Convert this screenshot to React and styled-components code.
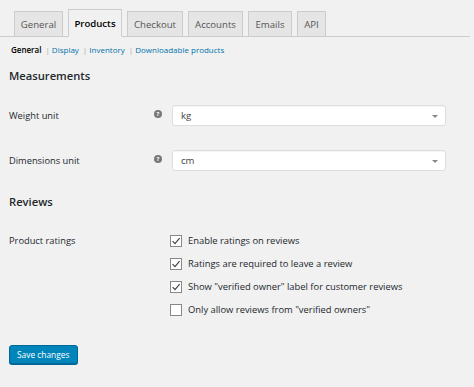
import React, { useState } from 'react';
import styled, { createGlobalStyle } from 'styled-components';

const GlobalStyle = createGlobalStyle`
    html, body {
        margin: 0;
        padding: 0;
        background: #f1f1f1;
    }
    body {
        font-family: "Open Sans", "Noto Sans", sans-serif;
        color: #23282d;
    }
`;

const Page = styled.div`
    width: 474px;
    height: 387px;
    overflow: hidden;
    background: #f1f1f1;
`;

const TabBar = styled.nav`
    display: flex;
    align-items: flex-end;
    gap: 5px;
    height: 27px;
    padding: 9px 0 0 14px;
    margin-right: 4px;
    border-bottom: 1px solid #ccc;
`;

const Tab = styled.a`
    display: flex;
    align-items: center;
    justify-content: center;
    box-sizing: border-box;
    width: ${(props) => props.w}px;
    height: ${(props) => (props.active ? 28 : 25)}px;
    margin-bottom: ${(props) => (props.active ? -1 : 0)}px;
    padding-top: 1px;
    border: 1px solid #ccc;
    border-bottom: ${(props) => (props.active ? '1px solid #f1f1f1' : 'none')};
    background: ${(props) => (props.active ? '#f1f1f1' : '#e5e5e5')};
    color: ${(props) => (props.active ? '#000' : '#555')};
    font-size: 9.6px;
    font-weight: ${(props) => (props.active ? 600 : 400)};
    cursor: pointer;
`;

const Content = styled.div`
    padding: 0 9px;
`;

const SubNav = styled.ul`
    display: flex;
    list-style: none;
    margin: 7px 0 0 2px;
    padding: 0;
    font-size: 8px;
    line-height: 12px;
`;

const SubItem = styled.li`
    color: ${(props) => (props.current ? '#000' : '#0073aa')};
    font-weight: ${(props) => (props.current ? 600 : 400)};
    &:not(:first-child)::before {
        content: '|';
        color: #aaa;
        margin: 0 2px 0 4px;
        font-weight: 400;
    }
`;

const SectionTitle = styled.h2`
    margin: ${(props) => props.top}px 0 0;
    font-size: 11.2px;
    line-height: 16px;
    font-weight: 600;
    color: #23282d;
`;

const FieldRow = styled.div`
    display: grid;
    grid-template-columns: 145px 18px 274px;
    align-items: ${(props) => (props.top ? 'start' : 'center')};
    margin-top: ${(props) => props.gap}px;
`;

const Label = styled.label`
    font-size: 9.3px;
    color: #23282d;
    line-height: ${(props) => (props.lh ? props.lh : 21)}px;
`;

const Help = styled.span`
    display: flex;
    align-items: center;
    justify-content: center;
    width: 8px;
    height: 8px;
    margin-top: -3px;
    border-radius: 50%;
    background: #777;
    color: #fff;
    font-size: 6px;
    font-weight: 700;
    line-height: 1;
`;

const Select = styled.div`
    position: relative;
    box-sizing: border-box;
    height: 21px;
    display: flex;
    align-items: center;
    padding-left: 8px;
    background: #fff;
    border: 1px solid #ddd;
    border-radius: 3px;
    box-shadow: inset 0 1px 1px rgba(0, 0, 0, 0.04);
    font-size: 9.6px;
    color: #444;
`;

const Arrow = styled.span`
    position: absolute;
    right: 7px;
    top: 9px;
    width: 0;
    height: 0;
    border-left: 3px solid transparent;
    border-right: 3px solid transparent;
    border-top: 3px solid #888;
`;

const CheckList = styled.div`
    display: flex;
    flex-direction: column;
`;

const CheckLine = styled.label`
    display: flex;
    align-items: center;
    gap: 6px;
    height: 23px;
    font-size: 9.4px;
    color: #23282d;
    cursor: pointer;
`;

const Box = styled.span`
    box-sizing: border-box;
    width: 12px;
    height: 12px;
    margin-left: -2px;
    border: 1px solid #888;
    background: #fff;
    display: flex;
    align-items: center;
    justify-content: center;
`;

const SaveButton = styled.button`
    margin-top: 24px;
    height: 19px;
    padding: 0 7px;
    border: 1px solid #006799;
    border-radius: 3px;
    background: #0085ba;
    color: #fff;
    font-family: inherit;
    font-size: 8.4px;
    cursor: pointer;
    box-shadow: 0 1px 0 #006799;
`;

const tabs = [
    { name: 'General', w: 49 },
    { name: 'Products', w: 54 },
    { name: 'Checkout', w: 56 },
    { name: 'Accounts', w: 55 },
    { name: 'Emails', w: 44 },
    { name: 'API', w: 29 }
];

const reviewOptions = [
    { label: 'Enable ratings on reviews', on: true },
    { label: 'Ratings are required to leave a review', on: true },
    { label: 'Show "verified owner" label for customer reviews', on: true },
    { label: 'Only allow reviews from "verified owners"', on: false }
];

function Checkbox({ checked, label, onToggle }) {
    return (
        <CheckLine onClick={onToggle}>
            <Box>
                {checked ? (
                    <svg width="10" height="10" viewBox="0 0 10 10">
                        <path d="M1.6 5.2 L4 7.6 L8.6 2.2" fill="none" stroke="#444" strokeWidth="1.2" />
                    </svg>
                ) : null}
            </Box>
            {label}
        </CheckLine>
    );
}

export default function App() {
    const [checks, setChecks] = useState(reviewOptions.map((o) => o.on));

    const toggle = (i) => {
        const copy = [...checks];
        copy[i] = !copy[i];
        setChecks(copy);
    };

    return (
        <Page>
            <GlobalStyle />
            <TabBar>
                {tabs.map((t) => (
                    <Tab key={t.name} w={t.w} active={t.name === 'Products'}>{t.name}</Tab>
                ))}
            </TabBar>
            <Content>
                <SubNav>
                    <SubItem current>General</SubItem>
                    <SubItem>Display</SubItem>
                    <SubItem>Inventory</SubItem>
                    <SubItem>Downloadable products</SubItem>
                </SubNav>

                <SectionTitle top={12}>Measurements</SectionTitle>
                <FieldRow gap={21}>
                    <Label>Weight unit</Label>
                    <Help>?</Help>
                    <Select>kg<Arrow /></Select>
                </FieldRow>
                <FieldRow gap={24}>
                    <Label>Dimensions unit</Label>
                    <Help>?</Help>
                    <Select>cm<Arrow /></Select>
                </FieldRow>

                <SectionTitle top={23}>Reviews</SectionTitle>
                <FieldRow gap={19} top>
                    <Label lh={23}>Product ratings</Label>
                    <span />
                    <CheckList>
                        {reviewOptions.map((o, i) => (
                            <Checkbox key={o.label} label={o.label} checked={checks[i]} onToggle={() => toggle(i)} />
                        ))}
                    </CheckList>
                </FieldRow>

                <SaveButton>Save changes</SaveButton>
            </Content>
        </Page>
    );
}
